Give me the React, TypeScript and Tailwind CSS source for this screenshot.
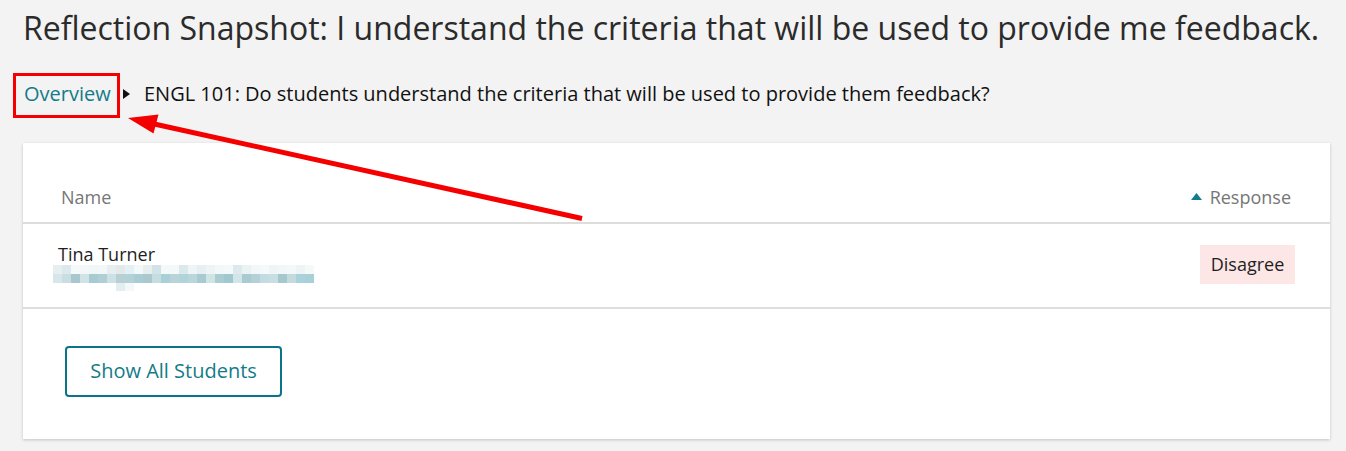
import React from "react";

const pix1 = [
  "#e6eef0","#dbe8ec","#f5f9fa","#f3f7f8","#f1f6f7","#f3f7f8","#e7eef0","#e3e9ea","#e2f1f5","#f3f8f9","#e6eef0","#cfe3e8","#f4f8f9","#f3f8f9","#dbe8ec","#eef5f6","#e7eff2","#eef4f5","#f2f7f8","#f5f9fa","#dde9ed","#ebf2f4","#f3f7f8","#f5f9fa","#eff5f6","#f1f6f7","#f4f8f9","#eef4f6","#f5f9fa",
];
const pix2 = [
  "#d6e6ea","#c9dde2","#a6c8ce","#d0e3e7","#a6cbd1","#afcfd4","#cde1e4","#b8cfd3","#b3d2d8","#a8cdd4","#aac9ce","#c5dce0","#a9d0d8","#b9d3d8","#b1d3da","#bad6da","#a8cad2","#d1e4e4","#aaccd3","#a1c8d0","#d2e5e8","#a8cbd1","#b3d1d6","#c3dce1","#c7dfe2","#a5c8cd","#c4dadd","#a9d2da","#a9d0d8",
];

function Pixelated() {
  return (
    <svg width="261" height="27" viewBox="0 0 261 27" className="block">
      {pix1.map((c, i) => (
        <rect key={"a" + i} x={i * 9} y={0} width={9} height={9} fill={c} />
      ))}
      {pix2.map((c, i) => (
        <rect key={"b" + i} x={i * 9} y={9} width={9} height={9} fill={c} />
      ))}
      <rect x={63} y={18} width={9} height={8} fill="#e4eef0" />
      <rect x={72} y={18} width={9} height={8} fill="#f3f8f9" />
    </svg>
  );
}

export default function App() {
  const font = { fontFamily: "'Open Sans', 'Liberation Sans', sans-serif" };
  return (
    <div className="relative min-h-[451px] w-[1346px] bg-[#f3f3f3] overflow-hidden" style={font}>
      <h1 className="pl-[23px] pt-[8px] text-[32px] leading-[40px] text-[#2b2b2b] font-normal whitespace-nowrap">
        Reflection Snapshot: I understand the criteria that will be used to provide me feedback.
      </h1>
      <div className="mt-[25px] flex items-center h-[45px]">
        <div className="ml-[13px] h-[45px] w-[107px] border-[3px] border-[#f50000] flex items-center pl-[8px] pb-[3px]">
          <span className="text-[20px] leading-[26px] text-[#137b89]">Overview</span>
        </div>
        <svg width="7" height="10" viewBox="0 0 7 10" className="ml-[3px] mr-[14px] mb-[4px]">
          <path d="M0 0 L7 5 L0 10 Z" fill="#111" />
        </svg>
        <span className="pb-[3px] text-[20px] leading-[26px] text-[#111]">
          ENGL 101: Do students understand the criteria that will be used to provide them feedback?
        </span>
      </div>
      <div className="ml-[23px] mt-[25px] w-[1307px] h-[296px] bg-white shadow-[0_1px_3px_rgba(0,0,0,0.2)]">
        <div className="flex items-end justify-between h-[81px] pb-[13px] pl-[38px] pr-[39px] border-b-2 border-[#dddddd]">
          <span className="text-[18px] leading-[24px] text-[#767676]">Name</span>
          <span className="flex items-center text-[18px] leading-[24px] text-[#767676]">
            <svg width="11" height="7" viewBox="0 0 11 7" className="mr-[8px] mb-[1px]">
              <path d="M0 7 L5.5 0 L11 7 Z" fill="#137b89" />
            </svg>
            Response
          </span>
        </div>
        <div className="flex items-center justify-between h-[85px] pl-[30px] pr-[35px] border-b-2 border-[#dddddd]">
          <div className="flex flex-col pt-[2px]">
            <span className="pl-[5px] text-[18px] leading-[24px] text-[#1e1e1e]">Tina Turner</span>
            <div className="mt-[-1px]">
              <Pixelated />
            </div>
          </div>
          <span className="mb-[2px] h-[39px] w-[95px] justify-center flex items-center bg-[#fde6e6] text-[18px] text-[#1e1e1e]">
            Disagree
          </span>
        </div>
        <div className="pl-[42px] pt-[37px]">
          <button className="h-[51px] w-[217px] rounded-[4px] border-2 border-[#0a7489] text-[20px] text-[#137b89] pb-[2px]">
            Show All Students
          </button>
        </div>
      </div>
      <svg className="absolute left-0 top-0 pointer-events-none" width="1346" height="451">
        <line x1="582" y1="218.5" x2="152" y2="123.5" stroke="#f50000" strokeWidth="5" />
        <path d="M128 118 L158.5 114.5 L153.5 133.5 Z" fill="#f50000" />
      </svg>
    </div>
  );
}
